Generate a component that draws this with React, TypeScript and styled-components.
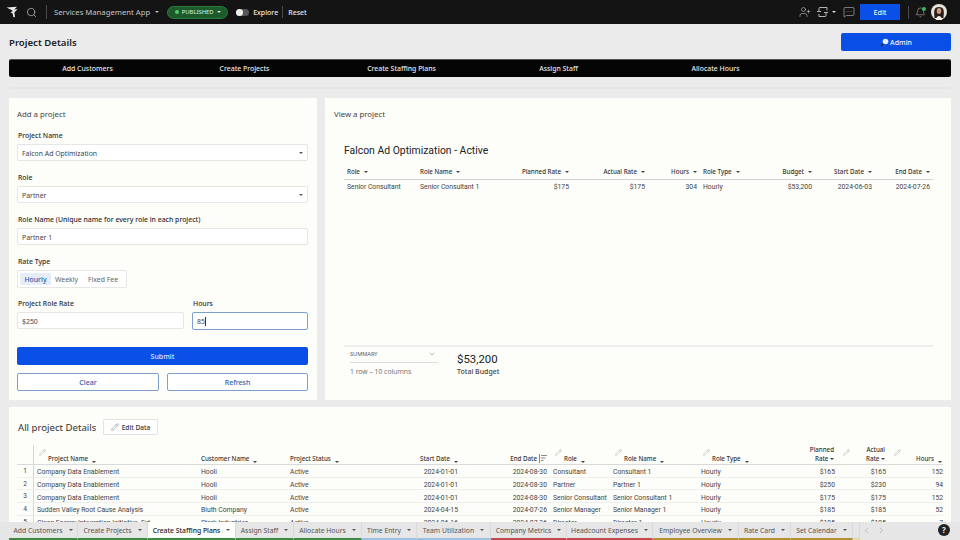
import React from "react";
import styled, { createGlobalStyle } from "styled-components";
import { Search, Bell, MessageSquareMore, UserPlus, Pencil, ChevronDown, ChevronLeft, ChevronRight } from "lucide-react";

const sans = `"Noto Sans", "Open Sans", sans-serif`;
const roboto = `Roboto, "Liberation Sans", sans-serif`;

const GlobalStyle = createGlobalStyle`
  html, body {
    margin: 0;
    padding: 0;
    background: #ebebeb;
  }
  * {
    box-sizing: border-box;
  }
`;

const Page = styled.div`
  width: 960px;
  height: 540px;
  overflow: hidden;
  display: flex;
  flex-direction: column;
  font-family: ${sans};
  color: #222;
`;

/* top bar */
const TopBar = styled.header`
  height: 24px;
  flex: none;
  background: #141414;
  color: #e8e8e8;
  display: flex;
  align-items: center;
  padding: 0 13px 0 6px;
  font-size: 7px;
`;

const Divider = styled.span<{ $h?: number; $l: number; $r: number }>`
  width: 1px;
  height: ${({ $h }) => $h ?? 14}px;
  background: #4a4a4a;
  margin: 0 ${({ $r }) => $r}px 0 ${({ $l }) => $l}px;
`;

const AppTitle = styled.span`
  color: #c4c4c4;
  font-size: 7.7px;
  margin-right: 5px;
  white-space: nowrap;
`;

const Caret = styled.span<{ $color?: string }>`
  display: inline-block;
  width: 0;
  height: 0;
  flex: none;
  vertical-align: middle;
  border-left: 2px solid transparent;
  border-right: 2px solid transparent;
  border-top: 2px solid ${({ $color }) => $color ?? "#555"};
`;

const Published = styled.span`
  margin-left: 8px;
  width: 61px;
  height: 13px;
  border-radius: 7px;
  background: #1d5a2c;
  border: 1px solid #2c7a3f;
  color: #cfe6d0;
  font-size: 5.8px;
  font-weight: 500;
  display: flex;
  align-items: center;
  justify-content: center;
  gap: 3px;
`;

const GreenDot = styled.span`
  width: 4px;
  height: 4px;
  border-radius: 50%;
  background: #58c76b;
`;

const Toggle = styled.span`
  margin-left: 8px;
  width: 13px;
  height: 7px;
  border-radius: 4px;
  background: #555;
  display: flex;
  align-items: center;
`;

const ToggleKnob = styled.span`
  width: 7px;
  height: 7px;
  border-radius: 50%;
  background: #eee;
`;

const BarText = styled.span<{ $l?: number }>`
  margin-left: ${({ $l }) => $l ?? 0}px;
  font-weight: 500;
  white-space: nowrap;
`;

const BarSpacer = styled.span`
  flex: 1;
`;

const BarIcons = styled.div`
  display: flex;
  align-items: center;
  color: #ddd;
`;

const BarGap = styled.span<{ $w: number }>`
  width: ${({ $w }) => $w}px;
`;

const EditButton = styled.span`
  width: 40px;
  height: 16px;
  margin-left: 5px;
  background: #0a50e6;
  color: #e9effc;
  font-size: 7.2px;
  font-weight: 500;
  display: flex;
  align-items: center;
  justify-content: center;
`;

const BellWrap = styled.span`
  position: relative;
  display: flex;
  margin-right: 5px;
`;

const BellDot = styled.span`
  position: absolute;
  top: 0;
  right: 0;
  width: 4px;
  height: 4px;
  border-radius: 50%;
  background: #3fb55c;
`;

/* heading and page nav */
const HeadRow = styled.div`
  height: 35px;
  flex: none;
  padding: 9px 9px 0;
  display: flex;
  justify-content: space-between;
  align-items: flex-start;
`;

const PageTitle = styled.h1`
  margin: 3px 0 0;
  font-size: 9.6px;
  line-height: 14px;
  font-weight: 600;
  color: #222;
`;

const AdminButton = styled.button`
  width: 110px;
  height: 18px;
  border: 0;
  border-radius: 2px;
  background: #0a50e6;
  color: #f0f4fe;
  font: 500 7px ${sans};
  display: flex;
  align-items: center;
  justify-content: center;
  gap: 1px;
  padding: 0;
`;

const PageNav = styled.nav`
  flex: none;
  height: 18px;
  margin: 0 9px;
  border-radius: 2px;
  border-top: 1px solid #555;
  background: #050505;
  display: grid;
  grid-template-columns: repeat(6, 1fr);
  align-items: center;
`;

const NavItem = styled.span`
  color: #e8e8e8;
  font-size: 6.9px;
  font-weight: 500;
  text-align: center;
`;

const Rule = styled.div`
  flex: none;
  height: 2px;
  margin: 10px 9px 9px;
  background: #e6e6e6;
`;

/* cards */
const CardRow = styled.div`
  flex: none;
  height: 302px;
  margin: 0 9px;
  display: grid;
  grid-template-columns: 308px 626px;
  gap: 8px;
`;

const Card = styled.section`
  background: #fdfdfa;
  display: flex;
  flex-direction: column;
  min-height: 0;
`;

const CardLabel = styled.div`
  font-size: 7.8px;
  line-height: 12px;
  color: #444;
`;

const FormCard = styled(Card)`
  padding: 10px 9px 0 8px;
`;

const Field = styled.div<{ $top?: number }>`
  display: flex;
  flex-direction: column;
  min-width: 0;
  margin-top: ${({ $top }) => $top ?? 0}px;
`;

const FieldLabel = styled.label`
  height: 10px;
  line-height: 12px;
  margin: 0 0 4px 1px;
  font-size: 6.9px;
  font-weight: 500;
  color: #2c2c2c;
  white-space: nowrap;
`;

const Input = styled.div<{ $focus?: boolean }>`
  height: ${({ $focus }) => ($focus ? 18 : 17)}px;
  border: 1px solid ${({ $focus }) => ($focus ? "#7d9fcb" : "#e6e6e4")};
  border-radius: 2px;
  background: #fff;
  padding: 1px 4px 0;
  font-size: 6.9px;
  color: #444;
  display: flex;
  align-items: center;
  justify-content: ${({ $focus }) => ($focus ? "flex-start" : "space-between")};
`;

const TextCursor = styled.span`
  width: 1px;
  height: 9px;
  background: #333;
  margin-left: 0.5px;
`;

const Segments = styled.div`
  width: 110px;
  height: 18px;
  border: 1px solid #e6e6e4;
  border-radius: 2px;
  background: #fff;
  padding: 2px;
  display: flex;
  align-items: stretch;
`;

const Segment = styled.span<{ $active?: boolean; $w: number }>`
  width: ${({ $w }) => $w}px;
  display: flex;
  align-items: center;
  justify-content: center;
  font-size: 6.9px;
  font-weight: ${({ $active }) => ($active ? 500 : 400)};
  color: ${({ $active }) => ($active ? "#2f5aa8" : "#666")};
  background: ${({ $active }) => ($active ? "#e6edf9" : "transparent")};
  border-radius: 1px;
  white-space: nowrap;
`;

const TwoCols = styled.div`
  margin-top: 10px;
  display: grid;
  grid-template-columns: 167px 116px;
  gap: 8px;
`;

const PrimaryButton = styled.button`
  margin-top: 17px;
  height: 18px;
  border: 0;
  border-radius: 2px;
  background: #0a50e6;
  color: #dfe8fb;
  font: 500 7px ${sans};
  padding: 0;
`;

const OutlineButton = styled.button`
  height: 18px;
  border: 1px solid #7d9fcb;
  border-radius: 2px;
  background: #fff;
  color: #2f5aa8;
  font: 500 7px ${sans};
  padding: 0;
`;

const ButtonPair = styled.div`
  margin-top: 8px;
  display: grid;
  grid-template-columns: 142px 141px;
  gap: 8px;
`;

const ViewCard = styled(Card)`
  padding: 10px 18px 0 9px;
`;

const ViewTitle = styled.h2`
  margin: 23px 0 0 10px;
  font: 400 10.4px/16px ${roboto};
  color: #222;
`;

const detailCols = "73px 83px 72px 76px 52px 70px 45px 60px 58px";

const DetailHead = styled.div`
  margin: 5px 0 0 10px;
  height: 16px;
  display: grid;
  grid-template-columns: ${detailCols};
  border-bottom: 1px solid #d2d2d2;
  align-items: center;
`;

const DetailRow = styled.div`
  margin-left: 10px;
  height: 13px;
  display: grid;
  grid-template-columns: ${detailCols};
  align-items: center;
`;

const HeadCell = styled.div<{ $right?: boolean }>`
  padding: 0 3px;
  display: flex;
  align-items: center;
  justify-content: ${({ $right }) => ($right ? "flex-end" : "flex-start")};
  gap: 4px;
  font: 500 6.2px ${sans};
  color: #333;
  white-space: nowrap;
`;

const Cell = styled.div<{ $right?: boolean }>`
  padding: 0 3px;
  font: 400 6.8px ${roboto};
  color: #444;
  text-align: ${({ $right }) => ($right ? "right" : "left")};
  white-space: nowrap;
  overflow: hidden;
`;

const TableCell = styled(Cell)`
  padding-top: 3px;
`;

const Summary = styled.div`
  margin: auto 0 0 10px;
  height: 55px;
  border-top: 2px solid #eeeeec;
  display: flex;
  padding: 2px 0 0 6px;
`;

const SummaryLeft = styled.div`
  width: 88px;
`;

const SummaryToggle = styled.div`
  height: 14px;
  border-bottom: 1px solid #dcdcdc;
  display: flex;
  align-items: center;
  justify-content: space-between;
  padding: 0 2px 4px 0;
  font-size: 5.6px;
  color: #555;
`;

const SummaryMeta = styled.div`
  margin-top: 4px;
  font-size: 6.8px;
  color: #777;
`;

const SummaryRight = styled.div`
  margin-left: 19px;
`;

const SummaryValue = styled.div`
  font: 400 11.4px/14px ${roboto};
  color: #222;
  margin-top: 3px;
`;

const SummaryCaption = styled.div`
  margin-top: 1px;
  font-size: 7px;
  font-weight: 500;
  color: #444;
`;

/* bottom table */
const TableCard = styled(Card)`
  flex: none;
  height: 115px;
  margin: 7px 9px 0;
  padding: 12px 8px 0 8px;
  overflow: hidden;
`;

const TableTitleRow = styled.div`
  display: flex;
  align-items: center;
  gap: 7px;
  height: 16px;
`;

const TableTitle = styled.h2`
  margin: 0 0 0 1px;
  width: 78px;
  font-size: 9.6px;
  font-weight: 400;
  color: #333;
  white-space: nowrap;
`;

const EditData = styled.button`
  height: 16px;
  width: 55px;
  border: 1px solid #e4e4e2;
  background: #fff;
  border-radius: 1px;
  font: 500 6.6px ${sans};
  color: #333;
  display: flex;
  align-items: center;
  justify-content: center;
  gap: 3px;
  padding: 0;
`;

const TableClip = styled.div`
  margin-top: 10px;
  width: 926px;
  overflow: hidden;
`;

const tableCols = "17px 164px 89px 93px 81px 89px 60px 88px 82px 58px 51px 61px";

const TableHead = styled.div`
  width: 933px;
  height: 20px;
  display: grid;
  grid-template-columns: ${tableCols};
  border-bottom: 1.5px solid #dadada;
`;

const TableRow = styled.div`
  width: 933px;
  height: 12.7px;
  display: grid;
  grid-template-columns: ${tableCols};
  align-items: center;
  border-bottom: 1px solid #eeeeec;
`;

const Gutter = styled.div`
  height: 100%;
  border-right: 1px solid #d6d6d6;
  font: 400 6.6px ${roboto};
  color: #444;
  display: flex;
  align-items: center;
  justify-content: center;
`;

const TableHeadCell = styled.div<{ $right?: boolean; $pad?: number; $edge?: number }>`
  position: relative;
  height: 100%;
  padding: 0 ${({ $edge }) => $edge ?? 3}px 2.5px ${({ $pad }) => $pad ?? 3}px;
  display: flex;
  align-items: flex-end;
  justify-content: ${({ $right }) => ($right ? "flex-end" : "flex-start")};
  gap: 4px;
  font: 500 6.2px/9px ${sans};
  color: #333;
  white-space: nowrap;
`;

const TwoLines = styled.span`
  text-align: right;
`;

const PencilMark = styled.span`
  position: absolute;
  left: 5px;
  top: 4px;
  color: #777;
  display: flex;
`;

const SortMark = styled.span`
  display: flex;
  margin-left: -2px;
`;

/* sheet tabs */
const TabBar = styled.footer`
  flex: none;
  height: 18px;
  background: #e6e6e6;
  padding-left: 9px;
  display: flex;
  align-items: stretch;
`;

const Tab = styled.div<{ $w: number; $strip: string; $active?: boolean }>`
  width: ${({ $w }) => $w}px;
  flex: none;
  border-bottom: 2px solid ${({ $strip }) => $strip};
  border-right: 1px solid #dadada;
  background: ${({ $active }) => ($active ? "#fdfdfa" : "transparent")};
  color: ${({ $active }) => ($active ? "#222" : "#555")};
  font-size: 6.8px;
  font-weight: ${({ $active }) => ($active ? 500 : 400)};
  display: flex;
  align-items: center;
  justify-content: center;
  gap: 6px;
  white-space: nowrap;
  overflow: hidden;
`;

const TabArrows = styled.div`
  display: flex;
  align-items: center;
  gap: 6px;
  margin-left: 2px;
  margin-bottom: 2px;
  color: #888;
`;

const HelpDot = styled.span`
  margin: 0 10px 2px auto;
  align-self: center;
  width: 12px;
  height: 12px;
  border-radius: 50%;
  background: #222;
  color: #eee;
  font: 700 8px/12px ${sans};
  text-align: center;
`;

const Logo = () => (
  <svg width="12" height="12" viewBox="0 0 12 12" fill="#e8e8e8">
    <path d="M0.5 1.5 L11 0.8 L8.2 3.6 L11.5 3.2 L8.4 6.4 L9 11 L7.4 11.2 L6.6 7.4 L4.4 6.2 L7 4.9 L5 3.8 Z" />
  </svg>
);

const SyncIcon = () => (
  <svg width="13" height="12" viewBox="0 0 13 12" fill="none" stroke="#ddd" strokeWidth="0.8">
    <path d="M3 5V2.5a1 1 0 0 1 1-1h7v3M10 7v2.5a1 1 0 0 1-1 1H3V8" />
    <path d="M1 5.5h4M8 6.5h4" />
  </svg>
);

const Avatar = () => (
  <svg width="16" height="16" viewBox="0 0 16 16">
    <circle cx="8" cy="8" r="8" fill="#e6e2dc" />
    <path d="M3.6 14c-.5-4-.8-6 .2-9 1-2.7 7.4-2.7 8.4 0 1 3 .7 5 .2 9z" fill="#2a1c18" />
    <ellipse cx="8" cy="7" rx="2.3" ry="3" fill="#c99a80" />
    <path d="M5 16c.3-3 1.6-4 3-4s2.7 1 3 4z" fill="#f2efea" />
  </svg>
);

const KeyIcon = () => (
  <svg width="9" height="9" viewBox="0 0 9 9">
    <path d="M4 5L1 8" stroke="#1b2a44" strokeWidth="1.5" />
    <circle cx="5.5" cy="3.5" r="2.8" fill="#e6eefc" />
  </svg>
);

const SortIcon = () => (
  <svg width="8" height="9" viewBox="0 0 8 9" fill="none" stroke="#555" strokeWidth="0.7">
    <path d="M0.5 0v9M2 1.5h6M2 4h4.5M2 6.5h2.5" />
  </svg>
);

const detailColumns: [string, boolean][] = [
  ["Role", false],
  ["Role Name", false],
  ["Planned Rate", true],
  ["Actual Rate", true],
  ["Hours", true],
  ["Role Type", false],
  ["Budget", true],
  ["Start Date", true],
  ["End Date", true],
];

const detailValues = ["Senior Consultant", "Senior Consultant 1", "$175", "$175", "304", "Hourly", "$53,200", "2024-06-03", "2024-07-26"];

const navItems = ["Add Customers", "Create Projects", "Create Staffing Plans", "Assign Staff", "Allocate Hours"];

const rows = [
  ["Company Data Enablement", "Hooli", "Active", "2024-01-01", "2024-08-30", "Consultant", "Consultant 1", "Hourly", "$165", "$165", "1520"],
  ["Company Data Enablement", "Hooli", "Active", "2024-01-01", "2024-08-30", "Partner", "Partner 1", "Hourly", "$250", "$230", "940"],
  ["Company Data Enablement", "Hooli", "Active", "2024-01-01", "2024-08-30", "Senior Consultant", "Senior Consultant 1", "Hourly", "$175", "$175", "1520"],
  ["Sudden Valley Root Cause Analysis", "Bluth Company", "Active", "2024-04-15", "2024-07-26", "Senior Manager", "Senior Manager 1", "Hourly", "$185", "$185", "524"],
  ["Clean Energy Integration Initiative, Ext", "Stark Industries", "Active", "2024-06-16", "2024-07-26", "Director", "Director 1", "Hourly", "$195", "$195", "76"],
];

const rightAligned = [3, 4, 8, 9, 10];

const green = "#3c8a41";
const blue = "#9dbfe2";
const red = "#c5474f";
const gold = "#b48f32";

const tabs: { name: string; w: number; strip: string; active?: boolean }[] = [
  { name: "Add Customers", w: 69, strip: green },
  { name: "Create Projects", w: 70, strip: green },
  { name: "Create Staffing Plans", w: 88, strip: green, active: true },
  { name: "Assign Staff", w: 58, strip: green },
  { name: "Allocate Hours", w: 68, strip: green },
  { name: "Time Entry", w: 55, strip: blue },
  { name: "Team Utilization", w: 74, strip: blue },
  { name: "Company Metrics", w: 76, strip: red },
  { name: "Headcount Expenses", w: 86, strip: red },
  { name: "Employee Overview", w: 86, strip: gold },
  { name: "Rate Card", w: 52, strip: gold },
  { name: "Set Calendar", w: 62, strip: gold },
];

const App: React.FC = () => {
  return (
    <Page>
      <GlobalStyle />
      <TopBar>
        <Logo />
        <Search size={11} strokeWidth={1.25} style={{ marginLeft: 8 }} />
        <Divider $l={9} $r={7} />
        <AppTitle>Services Management App</AppTitle>
        <Caret $color="#bbb" />
        <Published>
          <GreenDot />
          PUBLISHED
          <Caret $color="#cfe6d0" />
        </Published>
        <Toggle>
          <ToggleKnob />
        </Toggle>
        <BarText $l={4}>Explore</BarText>
        <Divider $h={12} $l={4} $r={5} />
        <BarText>Reset</BarText>
        <BarSpacer />
        <BarIcons>
          <UserPlus size={12} strokeWidth={1} />
          <BarGap $w={5} />
          <SyncIcon />
          <BarGap $w={3} />
          <Caret $color="#ddd" />
          <BarGap $w={7} />
          <MessageSquareMore size={12} strokeWidth={1} />
          <EditButton>Edit</EditButton>
          <Divider $h={13} $l={8} $r={6} />
          <BellWrap>
            <Bell size={11} strokeWidth={1} />
            <BellDot />
          </BellWrap>
          <Avatar />
        </BarIcons>
      </TopBar>

      <HeadRow>
        <PageTitle>Project Details</PageTitle>
        <AdminButton>
          <KeyIcon />
          Admin
        </AdminButton>
      </HeadRow>

      <PageNav>
        {navItems.map((item) => (
          <NavItem key={item}>{item}</NavItem>
        ))}
      </PageNav>
      <Rule />

      <CardRow>
        <FormCard>
          <CardLabel>Add a project</CardLabel>
          <Field $top={10}>
            <FieldLabel>Project Name</FieldLabel>
            <Input>
              Falcon Ad Optimization
              <Caret />
            </Input>
          </Field>
          <Field $top={11}>
            <FieldLabel>Role</FieldLabel>
            <Input>
              Partner
              <Caret />
            </Input>
          </Field>
          <Field $top={11}>
            <FieldLabel>Role Name (Unique name for every role in each project)</FieldLabel>
            <Input>Partner 1</Input>
          </Field>
          <Field $top={11}>
            <FieldLabel>Rate Type</FieldLabel>
            <Segments>
              <Segment $active $w={31}>Hourly</Segment>
              <Segment $w={31}>Weekly</Segment>
              <Segment $w={42}>Fixed Fee</Segment>
            </Segments>
          </Field>
          <TwoCols>
            <Field>
              <FieldLabel>Project Role Rate</FieldLabel>
              <Input>$250</Input>
            </Field>
            <Field>
              <FieldLabel>Hours</FieldLabel>
              <Input $focus>
                85
                <TextCursor />
              </Input>
            </Field>
          </TwoCols>
          <PrimaryButton>Submit</PrimaryButton>
          <ButtonPair>
            <OutlineButton>Clear</OutlineButton>
            <OutlineButton>Refresh</OutlineButton>
          </ButtonPair>
        </FormCard>

        <ViewCard>
          <CardLabel>View a project</CardLabel>
          <ViewTitle>Falcon Ad Optimization - Active</ViewTitle>
          <DetailHead>
            {detailColumns.map(([name, right]) => (
              <HeadCell key={name} $right={right}>
                {name}
                <Caret $color="#444" />
              </HeadCell>
            ))}
          </DetailHead>
          <DetailRow>
            {detailValues.map((value, i) => (
              <Cell key={i} $right={detailColumns[i][1]}>
                {value}
              </Cell>
            ))}
          </DetailRow>
          <Summary>
            <SummaryLeft>
              <SummaryToggle>
                SUMMARY
                <ChevronDown size={8} strokeWidth={1.25} />
              </SummaryToggle>
              <SummaryMeta>1 row – 10 columns</SummaryMeta>
            </SummaryLeft>
            <SummaryRight>
              <SummaryValue>$53,200</SummaryValue>
              <SummaryCaption>Total Budget</SummaryCaption>
            </SummaryRight>
          </Summary>
        </ViewCard>
      </CardRow>

      <TableCard>
        <TableTitleRow>
          <TableTitle>All project Details</TableTitle>
          <EditData>
            <Pencil size={8} strokeWidth={1} />
            Edit Data
          </EditData>
        </TableTitleRow>
        <TableClip>
          <TableHead>
            <Gutter />
            <TableHeadCell $pad={14}>
              <PencilMark><Pencil size={7} strokeWidth={1} /></PencilMark>
              Project Name <Caret $color="#444" />
            </TableHeadCell>
            <TableHeadCell>Customer Name <Caret $color="#444" /></TableHeadCell>
            <TableHeadCell>Project Status <Caret $color="#444" /></TableHeadCell>
            <TableHeadCell $right>Start Date <Caret $color="#444" /></TableHeadCell>
            <TableHeadCell $right>
              End Date
              <SortMark><SortIcon /></SortMark>
            </TableHeadCell>
            <TableHeadCell $pad={14}>
              <PencilMark><Pencil size={7} strokeWidth={1} /></PencilMark>
              Role <Caret $color="#444" />
            </TableHeadCell>
            <TableHeadCell $pad={14}>
              <PencilMark><Pencil size={7} strokeWidth={1} /></PencilMark>
              Role Name <Caret $color="#444" />
            </TableHeadCell>
            <TableHeadCell $pad={14}>
              <PencilMark><Pencil size={7} strokeWidth={1} /></PencilMark>
              Role Type <Caret $color="#444" />
            </TableHeadCell>
            <TableHeadCell $right $edge={4}>
              <TwoLines>
                Planned<br />Rate <Caret $color="#444" />
              </TwoLines>
            </TableHeadCell>
            <TableHeadCell $right $edge={4}>
              <PencilMark><Pencil size={7} strokeWidth={1} /></PencilMark>
              <TwoLines>
                Actual<br />Rate <Caret $color="#444" />
              </TwoLines>
            </TableHeadCell>
            <TableHeadCell $right $edge={8}>
              <PencilMark><Pencil size={7} strokeWidth={1} /></PencilMark>
              Hours <Caret $color="#444" />
            </TableHeadCell>
          </TableHead>
          {rows.map((row, r) => (
            <TableRow key={r}>
              <Gutter>{r + 1}</Gutter>
              {row.map((value, i) => (
                <TableCell key={i} $right={rightAligned.includes(i)}>
                  {value}
                </TableCell>
              ))}
            </TableRow>
          ))}
        </TableClip>
      </TableCard>

      <TabBar>
        {tabs.map((tab) => (
          <Tab key={tab.name} $w={tab.w} $strip={tab.strip} $active={tab.active}>
            {tab.name}
            <Caret $color="#555" />
          </Tab>
        ))}
        <Tab $w={7} $strip="#e8d9a0" />
        <TabArrows>
          <ChevronLeft size={9} strokeWidth={1} />
          <ChevronRight size={9} strokeWidth={1.25} />
        </TabArrows>
        <HelpDot>?</HelpDot>
      </TabBar>
    </Page>
  );
};

export default App;
